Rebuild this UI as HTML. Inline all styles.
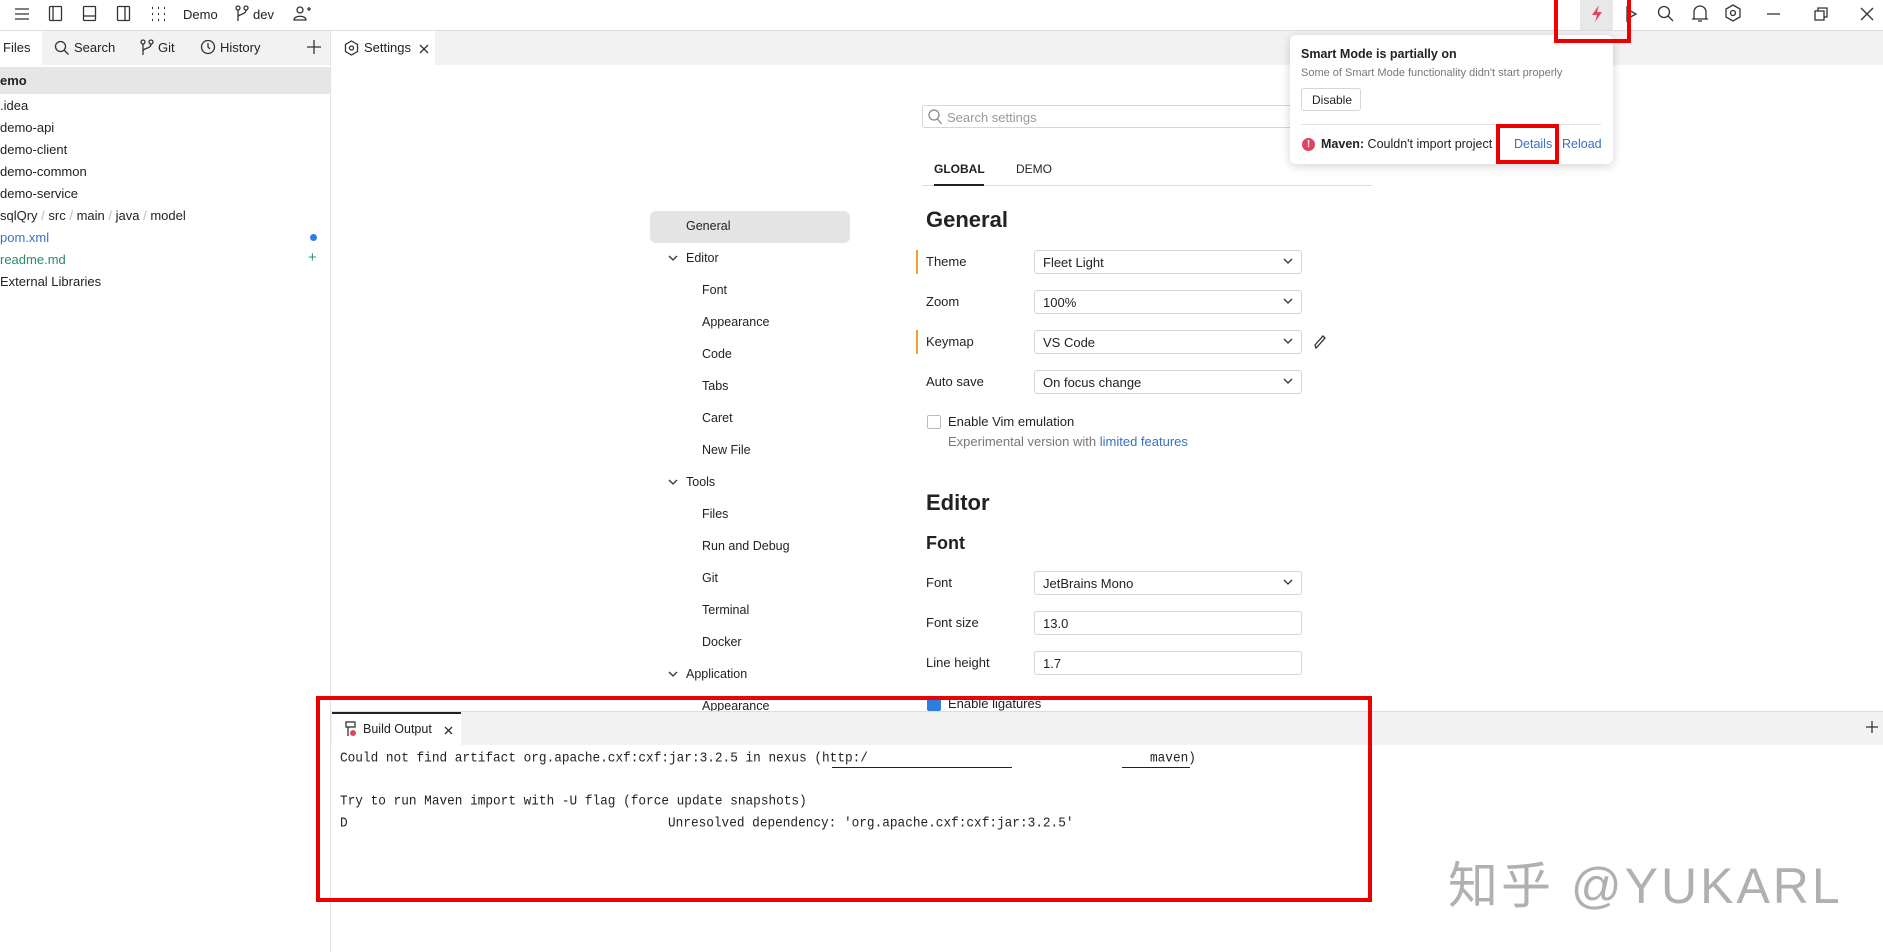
<!DOCTYPE html>
<html><head><meta charset="utf-8"><style>
*{box-sizing:border-box;margin:0;padding:0}
body{width:1883px;height:952px;overflow:hidden;background:#fff;font-family:"Liberation Sans",sans-serif;font-size:13px;color:#222;position:relative}
.a{position:absolute;white-space:nowrap}
svg{position:absolute;fill:none;stroke:#333;stroke-width:1.3}
.dd{position:absolute;left:1034px;width:268px;height:24px;border:1px solid #d6d6d6;border-radius:3px;padding:4px 8px;font-size:13px}
.dd svg{right:8px;top:7px}
.lbl{position:absolute;left:926px;font-size:13px}
.nav{position:absolute;font-size:12.5px;color:#222}
.mono{font-family:"Liberation Mono",monospace;font-size:12.75px;transform:scaleY(1.1)}
.red{position:absolute;border:4px solid #e00;}
</style></head><body>
<div class="a" style="left:0;top:30px;width:1883px;height:1px;background:#ddd"></div>
<svg style="left:14px;top:6px" width="16" height="16"><path d="M1 3h14M1 8h14M1 13h14"/></svg>
<svg style="left:48px;top:5px" width="16" height="18"><rect x="1.5" y="1.5" width="12" height="14" rx="1"/><path d="M5 2v13"/></svg>
<svg style="left:82px;top:5px" width="16" height="18"><rect x="1.5" y="1.5" width="12" height="14" rx="1"/><path d="M2 11h11"/></svg>
<svg style="left:116px;top:5px" width="16" height="18"><rect x="1.5" y="1.5" width="12" height="14" rx="1"/><path d="M9 2v13"/></svg>
<svg style="left:150px;top:6px" width="16" height="16"><path d="M2 2h1M8 2h1M14 2h1M2 8h1M8 8h1M14 8h1M2 14h1M8 14h1M14 14h1" stroke-width="2.2"/></svg>
<div class="a" style="left:183px;top:7px">Demo</div>
<svg style="left:235px;top:5px" width="14" height="18"><circle cx="3" cy="3" r="2"/><circle cx="11" cy="3" r="2"/><path d="M3 5v11M11 5c0 5-8 4-8 7"/></svg>
<div class="a" style="left:253px;top:7px">dev</div>
<svg style="left:293px;top:5px" width="18" height="18"><circle cx="7" cy="5" r="3"/><path d="M1 15c0-5 12-5 12 0zM14 4h4M16 2v4"/></svg>
<div class="a" style="left:1580px;top:0;width:33px;height:30px;background:#e8e8e8"></div>
<svg style="left:1589px;top:4px" width="16" height="20"><path d="M10 1L3 11h5l-2 7 7-10H8z" fill="#e0455f" stroke="none"/></svg>
<svg style="left:1625px;top:5px" width="14" height="18"><path d="M2 1v16M2 4l9 5-9 5"/></svg>
<svg style="left:1657px;top:5px" width="18" height="18"><circle cx="7" cy="7" r="5.5"/><path d="M11 11l5 5"/></svg>
<svg style="left:1691px;top:4px" width="18" height="20"><path d="M3 14V8a6 6 0 0112 0v6l1 1H2zM7 17h4"/></svg>
<svg style="left:1724px;top:4px" width="18" height="20"><path d="M9 1l7 4v8l-7 4-7-4V5z"/><circle cx="9" cy="9" r="2.5"/></svg>
<svg style="left:1766px;top:6px" width="16" height="16"><path d="M1 8h13"/></svg>
<svg style="left:1813px;top:6px" width="16" height="16"><rect x="2" y="5" width="9" height="9"/><path d="M5 5V2h9v9h-3"/></svg>
<svg style="left:1859px;top:6px" width="16" height="16"><path d="M2 2l12 12M14 2L2 14"/></svg>

<div class="a" style="left:0;top:31px;width:331px;height:34px;background:#f2f2f2"></div>
<div class="a" style="left:0;top:31px;width:42px;height:34px;background:#fff"></div>
<div class="a" style="left:3px;top:40px">Files</div>
<svg style="left:54px;top:40px" width="16" height="16"><circle cx="6.5" cy="6.5" r="5"/><path d="M10 10l4.5 4.5"/></svg>
<div class="a" style="left:74px;top:40px">Search</div>
<svg style="left:140px;top:39px" width="14" height="18"><circle cx="3" cy="3" r="2"/><circle cx="11" cy="3" r="2"/><path d="M3 5v11M11 5c0 5-8 4-8 7"/></svg>
<div class="a" style="left:158px;top:40px">Git</div>
<svg style="left:200px;top:39px" width="16" height="16"><circle cx="8" cy="8" r="6.5"/><path d="M8 4v4l2 2"/></svg>
<div class="a" style="left:220px;top:40px">History</div>
<svg style="left:307px;top:40px" width="14" height="14"><path d="M7 0v14M0 7h14"/></svg>
<div class="a" style="left:330px;top:31px;width:1px;height:921px;background:#e2e2e2"></div>
<div class="a" style="left:0;top:67px;width:330px;height:27px;background:#e6e6e6"></div>
<div class="a" style="left:0;top:73px;font-weight:bold">emo</div>
<div class="a" style="left:0;top:98px">.idea</div>
<div class="a" style="left:0;top:120px">demo-api</div>
<div class="a" style="left:0;top:142px">demo-client</div>
<div class="a" style="left:0;top:164px">demo-common</div>
<div class="a" style="left:0;top:186px">demo-service</div>
<div class="a" style="left:0;top:208px">sqlQry <span style="color:#bbb">/</span> src <span style="color:#bbb">/</span> main <span style="color:#bbb">/</span> java <span style="color:#bbb">/</span> model</div>
<div class="a" style="left:0;top:230px;color:#3a6fc4">pom.xml</div>
<div class="a" style="left:310px;top:234px;width:7px;height:7px;border-radius:50%;background:#2f7de1"></div>
<div class="a" style="left:0;top:252px;color:#2a8a6a">readme.md</div>
<div class="a" style="left:308px;top:249px;color:#2a9a6a;font-size:15px">+</div>
<div class="a" style="left:0;top:274px">External Libraries</div>

<div class="a" style="left:331px;top:31px;width:1552px;height:34px;background:#f2f2f2"></div>
<div class="a" style="left:331px;top:31px;width:104px;height:34px;background:#fff"></div>
<svg style="left:344px;top:40px" width="15" height="16"><path d="M7.5 1l6 3.5v7l-6 3.5-6-3.5v-7z"/><circle cx="7.5" cy="8" r="2"/></svg>
<div class="a" style="left:364px;top:40px">Settings</div>
<svg style="left:419px;top:44px" width="10" height="10"><path d="M1 1l8 8M9 1L1 9"/></svg>

<div class="a" style="left:650px;top:211px;width:200px;height:32px;background:#e4e4e4;border-radius:6px"></div>
<div class="nav" style="left:686px;top:219px">General</div>
<svg style="left:668px;top:255px" width="10" height="8"><path d="M1 1l4 4 4-4"/></svg>
<div class="nav" style="left:686px;top:251px">Editor</div>
<div class="nav" style="left:702px;top:283px">Font</div>
<div class="nav" style="left:702px;top:315px">Appearance</div>
<div class="nav" style="left:702px;top:347px">Code</div>
<div class="nav" style="left:702px;top:379px">Tabs</div>
<div class="nav" style="left:702px;top:411px">Caret</div>
<div class="nav" style="left:702px;top:443px">New File</div>
<svg style="left:668px;top:479px" width="10" height="8"><path d="M1 1l4 4 4-4"/></svg>
<div class="nav" style="left:686px;top:475px">Tools</div>
<div class="nav" style="left:702px;top:507px">Files</div>
<div class="nav" style="left:702px;top:539px">Run and Debug</div>
<div class="nav" style="left:702px;top:571px">Git</div>
<div class="nav" style="left:702px;top:603px">Terminal</div>
<div class="nav" style="left:702px;top:635px">Docker</div>
<svg style="left:668px;top:671px" width="10" height="8"><path d="M1 1l4 4 4-4"/></svg>
<div class="nav" style="left:686px;top:667px">Application</div>
<div class="nav" style="left:702px;top:699px">Appearance</div>

<div class="a" style="left:922px;top:105px;width:460px;height:23px;border:1px solid #d6d6d6;border-radius:3px"></div>
<svg style="left:928px;top:109px" width="14" height="16"><circle cx="6" cy="6" r="5" stroke="#888"/><path d="M9.5 10l4 5" stroke="#888"/></svg>
<div class="a" style="left:947px;top:110px;color:#999">Search settings</div>
<div class="a" style="left:934px;top:162px;font-size:12px;font-weight:bold">GLOBAL</div>
<div class="a" style="left:1016px;top:162px;font-size:12px">DEMO</div>
<div class="a" style="left:922px;top:185px;width:450px;height:1px;background:#ddd"></div>
<div class="a" style="left:934px;top:184px;width:50px;height:2px;background:#222"></div>
<div class="a" style="left:926px;top:207px;font-size:22px;font-weight:bold">General</div>
<div class="a" style="left:916px;top:250px;width:2px;height:24px;background:#f0a030"></div>
<div class="lbl" style="top:254px">Theme</div>
<div class="dd" style="top:250px">Fleet Light<svg width="10" height="8"><path d="M1 1l4 4 4-4"/></svg></div>
<div class="lbl" style="top:294px">Zoom</div>
<div class="dd" style="top:290px">100%<svg width="10" height="8"><path d="M1 1l4 4 4-4"/></svg></div>
<div class="a" style="left:916px;top:330px;width:2px;height:24px;background:#f0a030"></div>
<div class="lbl" style="top:334px">Keymap</div>
<div class="dd" style="top:330px">VS Code<svg width="10" height="8"><path d="M1 1l4 4 4-4"/></svg></div>
<svg style="left:1313px;top:334px" width="14" height="16"><path d="M3 14l-1-3 8-9 2 2-8 9z"/></svg>
<div class="lbl" style="top:374px">Auto save</div>
<div class="dd" style="top:370px">On focus change<svg width="10" height="8"><path d="M1 1l4 4 4-4"/></svg></div>
<div class="a" style="left:927px;top:415px;width:14px;height:14px;border:1px solid #bbb;border-radius:2px"></div>
<div class="a" style="left:948px;top:414px">Enable Vim emulation</div>
<div class="a" style="left:948px;top:434px;color:#777">Experimental version with <span style="color:#3a6fc4">limited features</span></div>
<div class="a" style="left:926px;top:490px;font-size:22px;font-weight:bold">Editor</div>
<div class="a" style="left:926px;top:533px;font-size:18px;font-weight:bold">Font</div>
<div class="lbl" style="top:575px">Font</div>
<div class="dd" style="top:571px">JetBrains Mono<svg width="10" height="8"><path d="M1 1l4 4 4-4"/></svg></div>
<div class="lbl" style="top:615px">Font size</div>
<div class="dd" style="top:611px">13.0</div>
<div class="lbl" style="top:655px">Line height</div>
<div class="dd" style="top:651px">1.7</div>
<div class="a" style="left:927px;top:697px;width:14px;height:14px;background:#2f7de1;border-radius:2px"></div>
<div class="a" style="left:948px;top:696px">Enable ligatures</div>

<div class="a" style="left:1290px;top:35px;width:323px;height:129px;background:#fff;border-radius:6px;box-shadow:0 2px 10px rgba(0,0,0,.18)"></div>
<div class="a" style="left:1301px;top:47px;font-weight:bold;font-size:12.5px">Smart Mode is partially on</div>
<div class="a" style="left:1301px;top:67px;color:#777;font-size:11px">Some of Smart Mode functionality didn't start properly</div>
<div class="a" style="left:1301px;top:88px;width:60px;height:23px;border:1px solid #d6d6d6;border-radius:3px;padding:4px 0 0 10px;font-size:12px">Disable</div>
<div class="a" style="left:1301px;top:124px;width:300px;height:1px;background:#e2e2e2"></div>
<div class="a" style="left:1302px;top:138px;width:13px;height:13px;border-radius:50%;background:#e0455f;color:#fff;font-size:10px;font-weight:bold;text-align:center;line-height:13px">!</div>
<div class="a" style="left:1321px;top:137px;font-size:12.5px"><b>Maven:</b> Couldn't import project</div>
<div class="a" style="left:1514px;top:137px;font-size:12.5px;color:#3a6fc4;background:#fff">Details</div>
<div class="a" style="left:1562px;top:137px;font-size:12.5px;color:#3a6fc4">Reload</div>

<div class="a" style="left:331px;top:711px;width:1552px;height:1px;background:#ddd"></div>
<div class="a" style="left:331px;top:712px;width:1552px;height:33px;background:#f2f2f2"></div>
<div class="a" style="left:332px;top:712px;width:129px;height:33px;background:#fff;border-top:2px solid #222"></div>
<svg style="left:345px;top:721px" width="12" height="16"><rect x="1" y="1" width="9" height="5"/><path d="M3 6v9"/><circle cx="8" cy="12" r="3" fill="#e0455f" stroke="none"/></svg>
<div class="a" style="left:363px;top:722px;font-size:12.5px">Build Output</div>
<svg style="left:444px;top:726px" width="9" height="9"><path d="M1 1l7 7M8 1L1 8"/></svg>
<svg style="left:1866px;top:721px" width="12" height="12"><path d="M6 0v12M0 6h12"/></svg>
<div class="a mono" style="left:340px;top:750px">Could not find artifact org.apache.cxf:cxf:jar:3.2.5 in nexus (http:/</div>
<div class="a" style="left:832px;top:767px;width:180px;height:1px;background:#222"></div>
<div class="a mono" style="left:1150px;top:750px">maven)</div>
<div class="a" style="left:1122px;top:767px;width:68px;height:1px;background:#222"></div>
<div class="a mono" style="left:340px;top:793px">Try to run Maven import with -U flag (force update snapshots)</div>
<div class="a mono" style="left:340px;top:815px">D</div>
<div class="a mono" style="left:668px;top:815px">Unresolved dependency: 'org.apache.cxf:cxf:jar:3.2.5'</div>

<div class="a" style="left:1448px;top:846px;font-size:50px;color:#b0b0b0;font-family:'Liberation Sans','Noto Sans CJK SC',sans-serif;letter-spacing:3px">知乎 @YUKARL</div>

<div class="red" style="left:1554px;top:-4px;width:77px;height:47px"></div>
<div class="red" style="left:1496px;top:124px;width:63px;height:40px"></div>
<div class="red" style="left:316px;top:696px;width:1056px;height:206px"></div>
</body></html>
